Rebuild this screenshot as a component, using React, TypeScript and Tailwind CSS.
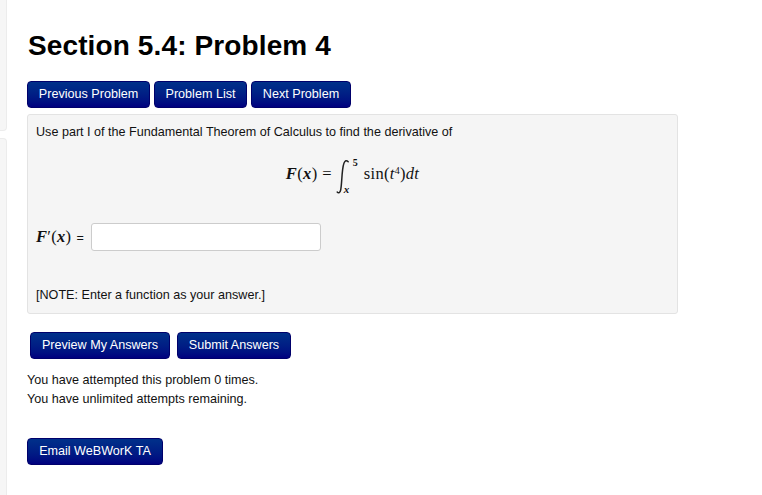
const sans = { fontFamily: '"Liberation Sans", Arial, sans-serif' };

function NavButton({ label, className = "" }: { label: string; className?: string }) {
  return (
    <button className={`h-[27px] rounded-[4px] border border-[#00006b] bg-gradient-to-b from-[#00308a] to-[#00007f] pb-[2px] text-white text-[12.6px] leading-[18px] ${className}`}>
      {label}
    </button>
  );
}

function MathVar({ children }: { children: React.ReactNode }) {
  return <i className="font-bold">{children}</i>;
}

function Integral() {
  return (
    <svg width="14" height="36" viewBox="0 0 14 36" className="block">
      <path d="M1.200 33c1.300 1.500 2.900 .8 3.500-2.200 1-5 1-13 1.900-20 .7-5.500 1.500-8.500 3.200-9 1-.2 1.700.2 2.400.9" fill="none" stroke="#222" strokeWidth="1.500" strokeLinecap="round" />
    </svg>
  );
}

export default function App() {
  return (
    <div className="flex min-h-[495px] bg-white text-[#111]" style={sans}>
      {/* cut off sidebar panels */}
      <div className="flex w-[7px] flex-col gap-[7px]">
        <div className="h-[131px] rounded-br border-r border-b border-[#ececec] bg-[#f6f6f6]" />
        <div className="flex-1 rounded-tr border-r border-t border-[#ececec] bg-[#f6f6f6]" />
      </div>

      <div className="w-[671px] pl-5">
        <h1 className="pl-px pt-[30px] text-[28px] leading-[32px] font-bold text-black tracking-[0.12px]">Section 5.4: Problem 4</h1>

        <div className="mt-[19px] flex gap-1">
          <NavButton label="Previous Problem" className="w-[123px]" />
          <NavButton label="Problem List" className="w-[93px]" />
          <NavButton label="Next Problem" className="w-[100px]" />
        </div>

        <div className="mt-[6px] h-[200px] rounded-[3px] border border-[#e3e3e3] bg-[#f5f5f5] px-2 pt-[9px] text-[12.6px] leading-[16px]">
          <p>Use part I of the Fundamental Theorem of Calculus to find the derivative of</p>

          <div className="mt-[9px] flex h-[50px] items-center justify-center font-['Liberation_Serif',serif] text-[16.500px]">
            <span className="tracking-[0.4px]"><MathVar>F</MathVar>(<MathVar>x</MathVar>) = </span>
            <span className="relative mt-[5px] ml-[4px] mr-[14px]">
              <Integral />
              <span className="absolute left-[17px] top-[-1px] text-[10px] leading-none font-bold">5</span>
              <span className="absolute left-[8px] bottom-[0px] text-[11px] leading-none"><MathVar>x</MathVar></span>
            </span>
            <span className="tracking-[0.3px]">
              sin(<i>t</i><sup className="text-[10px]">4</sup>)<i>dt</i>
            </span>
          </div>

          <div className="mt-[24px] flex items-center gap-[7px]">
            <span>
              <span className="font-['Liberation_Serif',serif] text-[16.500px] tracking-[0.3px]"><MathVar>F</MathVar>′(<MathVar>x</MathVar>)</span>
              <span className="ml-[5px]">=</span>
            </span>
            <input className="h-7 w-[230px] rounded-[3px] border border-[#ccc] bg-white" />
          </div>

          <p className="mt-[36px]">[NOTE: Enter a function as your answer.]</p>
        </div>

        <div className="mt-[18px] flex gap-[7px] pl-[3px]">
          <NavButton label="Preview My Answers" className="w-[140px]" />
          <NavButton label="Submit Answers" className="w-[114px]" />
        </div>

        <div className="mt-[12px] text-[12.6px] leading-[19px]">
          <p>You have attempted this problem 0 times.</p>
          <p>You have unlimited attempts remaining.</p>
        </div>

        <NavButton label="Email WeBWorK TA" className="mt-[29px] w-[136px]" />
      </div>
    </div>
  );
}
